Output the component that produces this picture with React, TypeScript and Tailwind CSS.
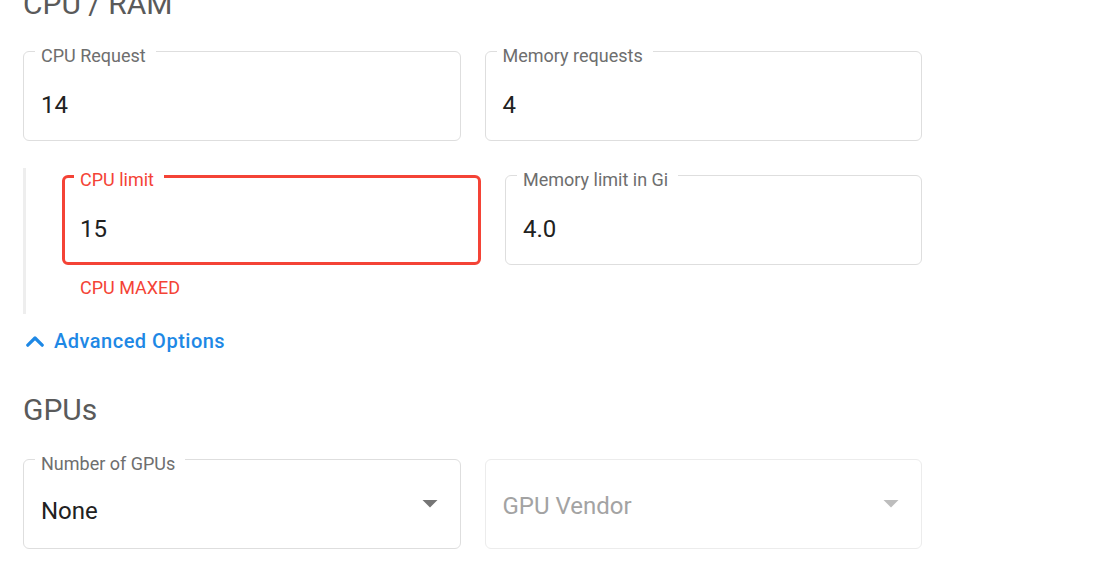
type FieldProps = {
  label: string
  value?: string
  error?: boolean
  hint?: string
  select?: boolean
  disabled?: boolean
}

function MenuDown({ className }: { className?: string }) {
  return (
    <svg viewBox="0 0 24 24" className={className} fill="currentColor">
      <path d="M7,10L12,15L17,10H7Z" />
    </svg>
  )
}

function Field({ label, value, error, hint, select, disabled }: FieldProps) {
  const floating = value !== undefined
  let box = "h-[90px] rounded-[6px] border border-[#dedede] pl-[17px] pt-[41px]"
  if (error) box = "h-[90px] rounded-[6px] border-[3px] border-[#f44336] pl-[15px] pt-[39px]"
  else if (disabled) box = "h-[90px] rounded-[6px] border border-[#ececec] pl-[17px] pt-[34px]"
  else if (select) box = "h-[90px] rounded-[6px] border border-[#dedede] pl-[17px] pt-[39px]"

  return (
    <div>
      <div className="relative">
        <div className={box}>
          {floating ? (
            <div className="text-[24px] leading-6 text-[#212121]">{value}</div>
          ) : (
            <div className="text-[24px] leading-6 text-[#a3a3a3]">{label}</div>
          )}
        </div>
        {floating && (
          <span
            className={
              error
                ? "absolute left-[12px] top-[-4px] bg-white pl-[6px] pr-[10px] text-[18px] leading-[18px] text-[#f44336]"
                : "absolute left-[12px] top-[-4px] bg-white pl-[6px] pr-[10px] text-[18px] leading-[18px] text-[#6e6e6e]"
            }
          >
            {label}
          </span>
        )}
        {select && (
          <MenuDown
            className={
              disabled
                ? "absolute right-[13px] top-[26px] h-9 w-9 text-[#bdbdbd]"
                : "absolute right-[13px] top-[26px] h-9 w-9 text-[#757575]"
            }
          />
        )}
      </div>
      {hint && (
        <div className="mt-[14px] pl-[18px] text-[18px] leading-[18px] text-[#f44336]">{hint}</div>
      )}
    </div>
  )
}

export default function App() {
  return (
    <div
      className="h-[581px] overflow-hidden bg-white"
      style={{ fontFamily: "Roboto, 'Noto Sans', sans-serif" }}
    >
      <div className="ml-[23px] w-[899px]">
        <h2 className="-mt-[14px] text-[30px] leading-9 text-[#5a5a5a]">CPU / RAM</h2>

        <div className="mt-[29px] grid grid-cols-2 gap-6">
          <Field label="CPU Request" value="14" />
          <Field label="Memory requests" value="4" />
        </div>

        <div className="mt-[27px] border-l-[3px] border-[#eeeeee] pb-[17px] pl-[36px] pt-[7px]">
          <div className="grid grid-cols-[419px_417px] items-start gap-6">
            <Field label="CPU limit" value="15" error hint="CPU MAXED" />
            <Field label="Memory limit in Gi" value="4.0" />
          </div>
        </div>

        <button className="mt-[15px] flex items-center gap-[10px] text-[20px] font-medium leading-6 tracking-[0.025em] text-[#1e88e5]">
          <svg width="18" height="11" viewBox="0 0 18 11" className="ml-[3px]">
            <polyline
              points="1.8,9.2 9,2 16.2,9.2"
              fill="none"
              stroke="currentColor"
              strokeWidth="3.2"
              strokeLinecap="round"
              strokeLinejoin="round"
            />
          </svg>
          Advanced Options
        </button>

        <h2 className="mt-[39px] text-[30px] leading-9 text-[#5a5a5a]">GPUs</h2>

        <div className="mt-[31px] grid grid-cols-2 gap-6">
          <Field label="Number of GPUs" value="None" select />
          <Field label="GPU Vendor" select disabled />
        </div>
      </div>
    </div>
  )
}
